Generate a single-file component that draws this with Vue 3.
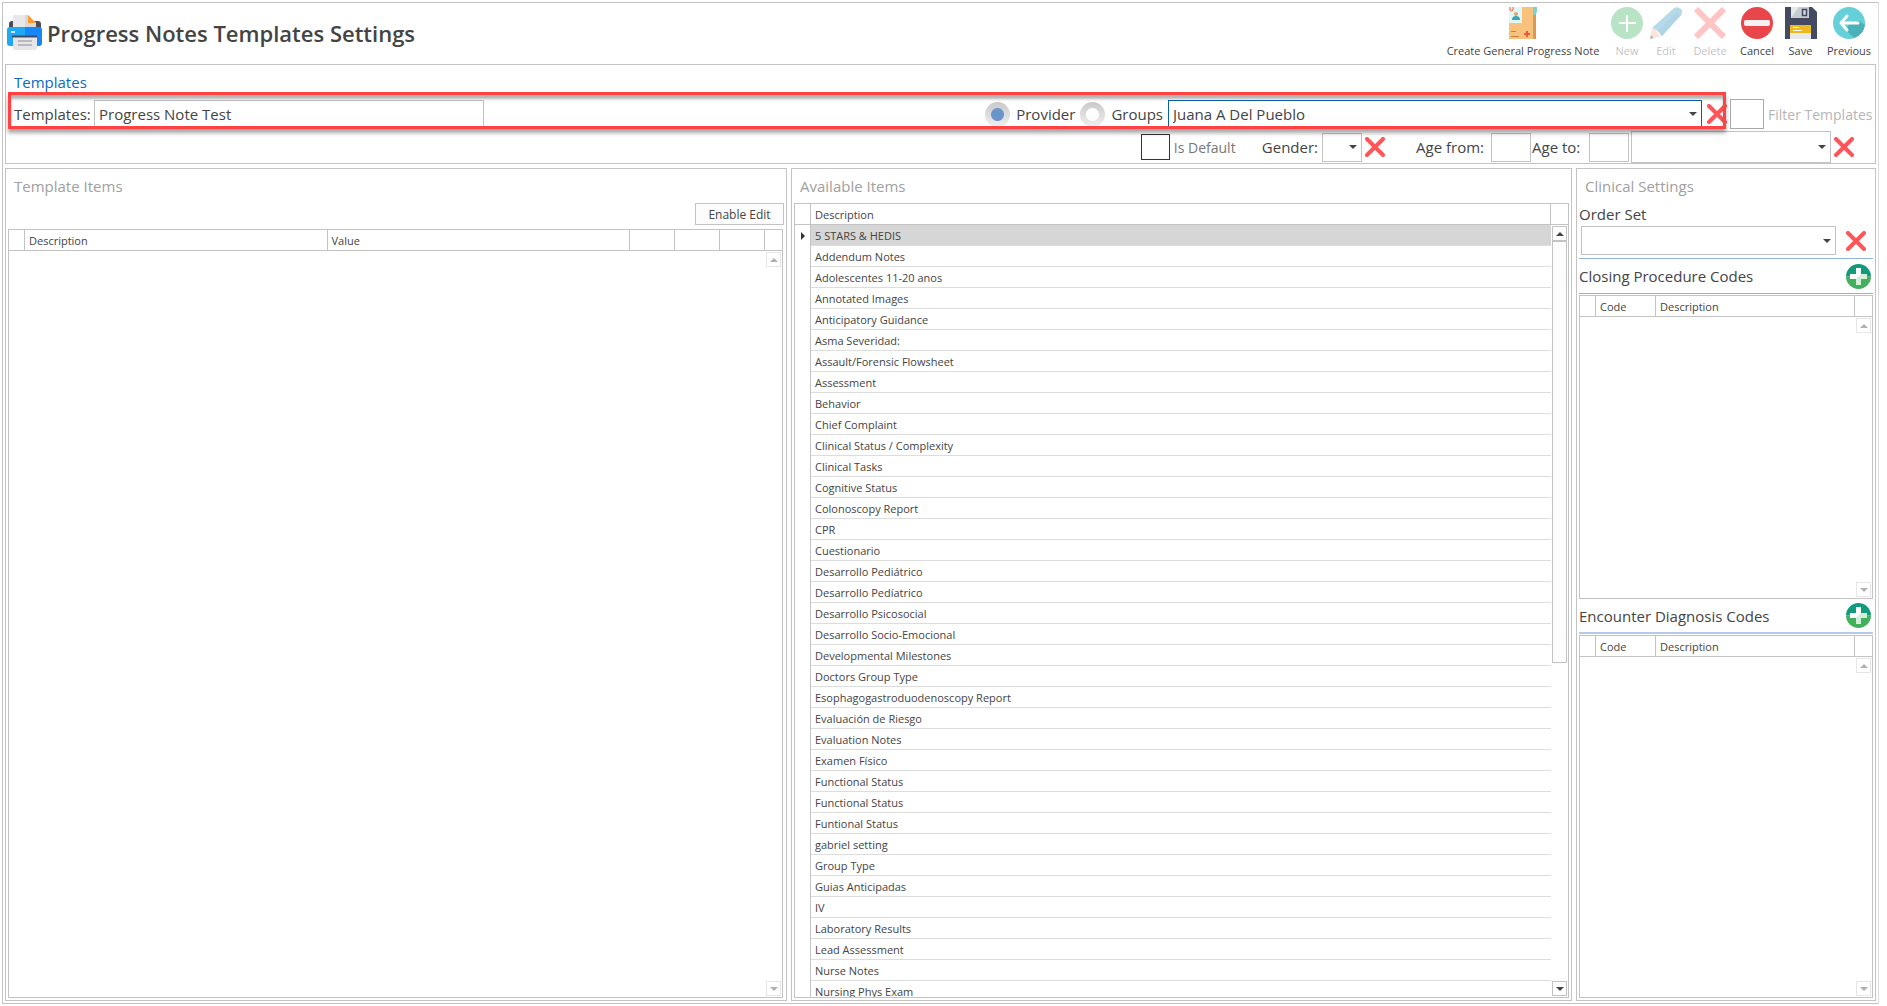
<script setup>
import { ref } from 'vue'

const templateName = ref('Progress Note Test')
const assignTo = ref('provider')
const selected = ref(0)

const items = [
  '5 STARS & HEDIS', 'Addendum Notes', 'Adolescentes 11-20 anos', 'Annotated Images',
  'Anticipatory Guidance', 'Asma Severidad:', 'Assault/Forensic Flowsheet', 'Assessment',
  'Behavior', 'Chief Complaint', 'Clinical Status / Complexity', 'Clinical Tasks',
  'Cognitive Status', 'Colonoscopy Report', 'CPR', 'Cuestionario', 'Desarrollo Pediátrico',
  'Desarrollo Pedíatrico', 'Desarrollo Psicosocial', 'Desarrollo Socio-Emocional',
  'Developmental Milestones', 'Doctors Group Type', 'Esophagogastroduodenoscopy Report',
  'Evaluación de Riesgo', 'Evaluation Notes', 'Examen Físico', 'Functional Status',
  'Functional Status', 'Funtional Status', 'gabriel setting', 'Group Type',
  'Guias Anticipadas', 'IV', 'Laboratory Results', 'Lead Assessment', 'Nurse Notes',
  'Nursing Phys Exam'
]

const codeGrids = [
  { title: 'Closing Procedure Codes', cls: 'closing' },
  { title: 'Encounter Diagnosis Codes', cls: 'encounter' }
]
</script>

<template>
  <div class="page">
    <main class="frame">
      <header class="top">
        <svg class="printer" viewBox="0 0 36 36" aria-hidden="true">
          <path d="M2 14V9q0-3 3-3h26q3 0 3 3v5z" fill="#4c4c54" />
          <path d="M6 13V2q0-2 2-2h13l8 8v5z" fill="#e8e8ea" />
          <path d="M18 0h3l8 8v5H18z" fill="#d9d9db" />
          <path d="M21 0l8 8h-8z" fill="#ff9b2b" />
          <path d="M3 12h15v19H3q-3 0-3-3V15q0-3 3-3z" fill="#1fa9f5" />
          <path d="M18 12h14q3 0 3 3v13q0 3-3 3H18z" fill="#1787f8" />
          <path d="M6 21h24v12q0 2-2 2H8q-2 0-2-2z" fill="#e6e6e9" />
          <path d="M5 20.5h25v2H5z" fill="#3d4b66" />
          <path d="M11 26h14M11 30h14" stroke="#a9a9b0" stroke-width="1.6" />
          <path d="M4 17h4" stroke="#c9eaff" stroke-width="2" />
        </svg>
        <h1>Progress Notes Templates Settings</h1>
        <nav class="toolbar">
          <button type="button">
            <svg viewBox="0 0 32 32" aria-hidden="true">
              <path d="M2 0h24v32H2z" fill="#f8c27c" />
              <path d="M26 0h3v32h-3z" fill="#d99a50" />
              <path d="M26 0h4v5l-2 3h-2z" fill="#79d0cf" />
              <path d="M2 0h13v16H2z" fill="#e3f5f5" />
              <circle cx="9" cy="7" r="2" fill="#e0a070" />
              <path d="M5 13q0-4 4-4t4 4z" fill="#3aa7b0" />
              <path d="M3 0v3q2 2 3 0V0" fill="none" stroke="#e8634d" />
              <path d="M4 24.500h5M4 29.500h8" stroke="#b98048" />
              <path d="M20 24v6M17 27h6" stroke="#ea5a3c" stroke-width="2" />
            </svg>
            <span>Create General Progress Note</span>
          </button>
          <button type="button" disabled>
            <svg viewBox="0 0 32 32" aria-hidden="true">
              <circle cx="16" cy="16" r="16" fill="#25ae4e" />
              <path d="M16 8v17M8 16h17" stroke="#fff" stroke-width="2" />
            </svg>
            <span>New</span>
          </button>
          <button type="button" disabled>
            <svg viewBox="0 0 32 32" aria-hidden="true">
              <path d="M23 2q3-3 6-1 4 1 3 6L12 29l-4-5-6-3z" fill="#1b8fc0" />
              <path d="M26 5l5 3-19 21-4-5z" fill="#0f7db0" />
              <path d="M2 21l5 2 1 4 4 2-12 3z" fill="#f2b08c" />
              <path d="M0 32l1-4 3 3z" fill="#333" />
            </svg>
            <span>Edit</span>
          </button>
          <button type="button" disabled>
            <svg viewBox="0 0 32 32" aria-hidden="true">
              <path d="M2 2l28 28M30 2L2 30" stroke="#ff4b4b" stroke-width="6" />
            </svg>
            <span>Delete</span>
          </button>
          <button type="button">
            <svg viewBox="0 0 32 32" aria-hidden="true">
              <circle cx="16" cy="16" r="16" fill="#e8464a" />
              <rect x="3" y="13" width="26" height="6" rx="2" fill="#f6f2f2" />
            </svg>
            <span>Cancel</span>
          </button>
          <button type="button">
            <svg viewBox="0 0 32 32" aria-hidden="true">
              <path d="M0 0h27l5 5v27H0z" fill="#434a62" />
              <path d="M6 0h18v11H6z" fill="#e6e9ea" />
              <path d="M14 0h10v11H6z" fill="#c8ccd0" />
              <path d="M17.500 2.500h4v6h-4z" fill="#d8dade" stroke="#434a62" stroke-width="1.5" />
              <path d="M5 18h21v8H5z" fill="#edb91f" />
              <path d="M5 26h21v6H5z" fill="#e6eaea" />
              <path d="M8 20.500h6M8 23.500h9" stroke="#fff" />
            </svg>
            <span>Save</span>
          </button>
          <button type="button">
            <svg viewBox="0 0 32 32" aria-hidden="true">
              <circle cx="16" cy="16" r="16" fill="#66d0da" />
              <path d="M13 23l8 8q9-3 11-13l-6-4-10 3z" fill="#4ab1ba" />
              <path d="M14 9l-6 7 6 7M8 16h17" fill="none" stroke="#fff" stroke-width="3" stroke-linecap="round" stroke-linejoin="round" />
            </svg>
            <span>Previous</span>
          </button>
        </nav>
      </header>

      <section class="box filters">
        <h2 class="active">Templates</h2>
        <div class="row">
          <label class="lead" for="tpl">Templates:</label>
          <input id="tpl" v-model="templateName" class="name" type="text" />
          <span class="spacer"></span>
          <label class="radio"><input v-model="assignTo" type="radio" value="provider" />Provider</label>
          <label class="radio"><input v-model="assignTo" type="radio" value="groups" />Groups</label>
          <select class="provider" aria-label="Provider">
            <option>Juana A Del Pueblo</option>
          </select>
          <button type="button" class="clear" aria-label="Clear provider">
            <svg viewBox="0 0 20 20"><path d="M2 2l16 16M18 2L2 18" /></svg>
          </button>
          <label class="check filter"><input type="checkbox" />Filter Templates</label>
        </div>
        <div class="row second">
          <label class="check default"><input type="checkbox" />Is Default</label>
          <label for="gender">Gender:</label>
          <select id="gender" class="gender"></select>
          <button type="button" class="clear" aria-label="Clear gender">
            <svg viewBox="0 0 20 20"><path d="M2 2l16 16M18 2L2 18" /></svg>
          </button>
          <label class="from" for="from">Age from:</label>
          <input id="from" class="age" type="text" />
          <label class="to" for="to">Age to:</label>
          <input id="to" class="age" type="text" />
          <select class="unit" aria-label="Age unit"></select>
          <button type="button" class="clear" aria-label="Clear age">
            <svg viewBox="0 0 20 20"><path d="M2 2l16 16M18 2L2 18" /></svg>
          </button>
        </div>
        <div class="highlight"></div>
      </section>

      <div class="columns">
        <section class="box template">
          <h2>Template Items</h2>
          <button type="button" class="enable">Enable Edit</button>
          <div class="grid">
            <table>
              <colgroup>
                <col class="c-mark" /><col /><col /><col class="c-small" /><col class="c-small" /><col class="c-small" /><col class="c-end" />
              </colgroup>
              <thead>
                <tr><th></th><th>Description</th><th>Value</th><th></th><th></th><th></th><th></th></tr>
              </thead>
            </table>
            <div class="scroll off">
              <button type="button" class="up" aria-label="Scroll up"></button>
              <button type="button" class="down" aria-label="Scroll down"></button>
            </div>
          </div>
        </section>

        <section class="box">
          <h2>Available Items</h2>
          <div class="grid">
            <table class="items">
              <colgroup>
                <col class="c-mark" /><col /><col class="c-end" />
              </colgroup>
              <thead>
                <tr><th></th><th>Description</th><th></th></tr>
              </thead>
              <tbody>
                <tr v-for="(item, i) in items" :key="i" :class="{ selected: i === selected }" @click="selected = i">
                  <td></td>
                  <td>{{ item }}</td>
                  <td></td>
                </tr>
              </tbody>
            </table>
            <div class="scroll">
              <button type="button" class="up" aria-label="Scroll up"></button>
              <div class="track"><div class="thumb"></div></div>
              <button type="button" class="down" aria-label="Scroll down"></button>
            </div>
          </div>
        </section>

        <section class="box clinical">
          <h2>Clinical Settings</h2>
          <label class="order-label" for="order">Order Set</label>
          <div class="order">
            <select id="order"></select>
            <button type="button" class="clear" aria-label="Clear order set">
              <svg viewBox="0 0 20 20"><path d="M2 2l16 16M18 2L2 18" /></svg>
            </button>
          </div>
          <div v-for="g in codeGrids" :key="g.title" class="codes" :class="g.cls">
            <div class="codes-head">
              <h3>{{ g.title }}</h3>
              <button type="button" class="add" :aria-label="'Add ' + g.title">
                <svg viewBox="0 0 25 25">
                  <path d="M0 12.500a12.500 12.500 0 0 1 25 0z" fill="#109b7a" />
                  <path d="M0 12.500a12.500 12.500 0 0 0 25 0z" fill="#43b05c" />
                  <path d="M10 4h5v6h6v5h-6v6h-5v-6H4v-5h6z" fill="#fff" />
                  <path d="M15 10h6v5h-6v6h-5v-6z" fill="#d3efdc" />
                </svg>
              </button>
            </div>
            <div class="grid">
              <table>
                <colgroup>
                  <col class="c-mark" /><col class="c-code" /><col /><col class="c-end" />
                </colgroup>
                <thead>
                  <tr><th></th><th>Code</th><th>Description</th><th></th></tr>
                </thead>
              </table>
              <div class="scroll off">
                <button type="button" class="up" aria-label="Scroll up"></button>
                <button type="button" class="down" aria-label="Scroll down"></button>
              </div>
            </div>
          </div>
        </section>
      </div>
    </main>
  </div>
</template>

<style>
body {
  background: #fff;
}
</style>

<style scoped>
.page,
.page * {
  box-sizing: border-box;
}
.page {
  height: 100vh;
  padding: 2px 8px 2px 2px;
  font-family: "Open Sans", "Noto Sans", sans-serif;
  font-size: 15px;
  color: #444;
}
.frame {
  height: 100%;
  display: flex;
  flex-direction: column;
  border: 1px solid #c3c3c3;
  border-right-color: #ddd;
  padding: 0 2px 2px;
}
button {
  font: inherit;
  color: inherit;
  background: none;
  border: none;
  padding: 0;
}
svg {
  display: block;
}
.top {
  display: flex;
  align-items: flex-start;
  height: 61px;
}
.printer {
  width: 36px;
  height: 36px;
  margin: 12px 4px 0 2px;
}
h1 {
  margin: 14px 0 0;
  font-size: 22px;
  line-height: 32px;
  font-weight: 600;
  white-space: nowrap;
}
.toolbar {
  margin-left: auto;
  padding: 4px 1px 0 0;
  display: grid;
  grid-template-columns: 166px 42px 36px 52px 42px 45px 52px;
}
.toolbar button {
  display: flex;
  flex-direction: column;
  align-items: center;
  font-size: 11px;
  line-height: 16px;
  gap: 4px;
  white-space: nowrap;
}
.toolbar button:disabled {
  opacity: 0.32;
}
.toolbar svg {
  width: 32px;
  height: 32px;
}
.box {
  border: 1px solid #c3c3c3;
  padding: 0 2px 2px;
  display: flex;
  flex-direction: column;
  min-height: 0;
  min-width: 0;
}
h2 {
  margin: 7px 0 6px 6px;
  font-size: 15px;
  line-height: 21px;
  font-weight: 400;
  color: #a0a0a0;
}
h2.active {
  color: #0a6ac4;
  margin: 7px 0 4px 6px;
}
.filters {
  position: relative;
  height: 100px;
  margin-bottom: 4px;
  padding-bottom: 0;
}
.row {
  display: flex;
  align-items: center;
  height: 34px;
  white-space: nowrap;
}
.lead {
  width: 80px;
  margin-left: 6px;
}
input[type="text"],
select {
  height: 29px;
  border: 1px solid #c3c3c3;
  border-radius: 0;
  background-color: #fff;
  font: inherit;
  color: inherit;
  padding: 0 4px;
}
select {
  appearance: none;
  background-image: url("data:image/svg+xml,%3Csvg xmlns='http://www.w3.org/2000/svg' width='8' height='4'%3E%3Cpath d='M0 0h8L4 4z' fill='%23444'/%3E%3C/svg%3E");
  background-repeat: no-repeat;
  background-position: right 4px center;
}
.name {
  width: 390px;
}
.spacer {
  flex: 1;
}
.radio {
  display: flex;
  align-items: center;
  gap: 6px;
  margin-right: 5px;
}
.radio input {
  appearance: none;
  width: 25px;
  height: 25px;
  margin: 0;
  border-radius: 50%;
  background: radial-gradient(circle, #fff 6px, transparent 7px), linear-gradient(#c9c9c9, #f0f0f0);
}
.radio input:checked {
  background: radial-gradient(circle, #6b94ca 6px, transparent 7px), linear-gradient(#c9c9c9, #f0f0f0);
}
.row .provider {
  width: 534px;
  border-color: #0a5fae;
}
.clear svg {
  width: 20px;
  height: 20px;
}
.clear path {
  stroke: #ff5558;
  stroke-width: 4;
  stroke-linecap: round;
}
.row .clear {
  margin: 0 3px;
}
.row .provider + .clear {
  margin-left: 5px;
}
.check {
  display: flex;
  align-items: center;
  gap: 4px;
}
.check input {
  appearance: none;
  margin: 0;
  background: #fff;
  width: 34px;
  height: 30px;
  border: 1px solid #aaa;
}
.filter {
  width: 143px;
  color: #b5b5b5;
  font-size: 14px;
}
.second {
  height: 32px;
  justify-content: flex-end;
  padding-right: 16px;
}
.default {
  width: 121px;
  color: #777;
  font-size: 14px;
}
.check.default input {
  width: 29px;
  height: 26px;
  border-color: #333;
}
.gender {
  width: 40px;
  margin-left: 4px;
}
.from {
  width: 75px;
  margin-left: 28px;
}
.to {
  width: 57px;
  margin-left: 1px;
}
.age {
  width: 40px;
}
.row .unit {
  width: 200px;
  height: 32px;
  margin-left: 2px;
}
/* callout frame drawn over the first filter row */
.highlight {
  position: absolute;
  left: 2px;
  right: 149px;
  top: 27px;
  height: 37px;
  border: 3px solid #ff4343;
  box-shadow: 0 4px 4px rgba(0, 0, 0, 0.35), inset 0 4px 3px rgba(0, 0, 0, 0.3);
  pointer-events: none;
}
.columns {
  flex: 1;
  min-height: 0;
  display: grid;
  grid-template-columns: minmax(0, 782fr) minmax(0, 781fr) 300px;
  grid-template-rows: minmax(0, 1fr);
  gap: 4px;
}
.enable {
  align-self: flex-end;
  width: 89px;
  height: 22px;
  margin-bottom: 4px;
  border: 1px solid #c3c3c3;
  background: #fcfcfc;
  font-size: 12px;
}
.grid {
  flex: 1;
  min-height: 0;
  display: grid;
  grid-template-columns: minmax(0, 1fr);
  grid-template-rows: minmax(0, 1fr);
  border: 1px solid #c3c3c3;
  overflow: hidden;
}
.template .grid {
  margin-right: 1px;
}
table {
  grid-area: 1 / 1;
  align-self: start;
  width: 100%;
  table-layout: fixed;
  border-collapse: separate;
  border-spacing: 0;
  font-size: 11px;
}
.c-mark { width: 16px; }
.c-small { width: 45px; }
.c-code { width: 60px; }
.c-end { width: 17px; }
th,
td {
  height: 21px;
  padding: 1px 4px 0;
  line-height: 16px;
  text-align: left;
  font-weight: 400;
  white-space: nowrap;
}
th {
  border-right: 1px solid #c3c3c3;
  border-bottom: 1px solid #c3c3c3;
}
th:last-child {
  border-right: none;
}
td:first-child {
  border-right: 1px solid #c3c3c3;
}
td:nth-child(2) {
  border-bottom: 1px solid #ddd;
}
.selected td:nth-child(2) {
  background: #d6d6d6;
}
.selected td:first-child::before {
  content: "";
  display: block;
  margin-left: 2px;
  width: 4px;
  border: 4px solid transparent;
  border-left-color: #333;
  border-right: none;
}
.scroll {
  grid-area: 1 / 1;
  justify-self: end;
  width: 15px;
  margin: 22px 1px 1px 0;
  display: flex;
  flex-direction: column;
  justify-content: space-between;
}
.scroll button {
  flex: none;
  width: 15px;
  height: 15px;
  border: 1px solid #c3c3c3;
  display: flex;
  align-items: center;
  justify-content: center;
  color: #444;
}
.scroll.off button {
  border-color: #e6e6e6;
  color: #b0b0b0;
}
.up::before,
.down::before {
  content: "";
  border: 4px solid transparent;
  border-top: none;
  border-bottom-color: currentColor;
}
.down::before {
  border: 4px solid transparent;
  border-bottom: none;
  border-top-color: currentColor;
}
.track {
  flex: 1;
}
.thumb {
  height: 57%;
  border: 1px solid #c3c3c3;
  background: #fcfcfc;
}
.clinical h2 {
  margin-bottom: 5px;
}
.order-label {
  line-height: 24px;
}
.order {
  display: flex;
  align-items: center;
  gap: 10px;
  padding: 0 7px 3px 2px;
}
.order select {
  flex: 1;
  min-width: 0;
}
.codes {
  display: flex;
  flex-direction: column;
  min-height: 0;
}
.closing {
  flex: 340 1 0;
  border-top: 1px solid #8fb2de;
}
.encounter {
  flex: 399 1 0;
}
.codes-head {
  display: flex;
  align-items: center;
  justify-content: space-between;
  height: 35px;
  flex: none;
  padding: 0 2px 0 0;
  border-bottom: 1px solid #8fb2de;
  margin-bottom: 1px;
}
.encounter .codes-head {
  border-bottom: 2px solid #b5cae8;
}
h3 {
  margin: 0;
  font-size: 15px;
  font-weight: 400;
}
.add svg {
  width: 25px;
  height: 25px;
}
</style>
